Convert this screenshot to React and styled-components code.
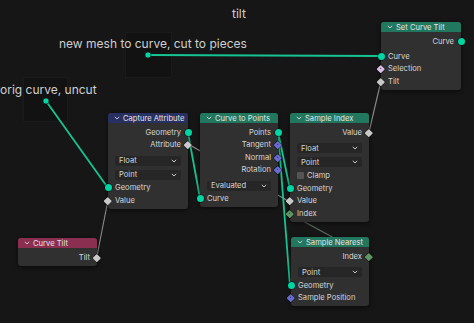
import React from "react";
import styled, { createGlobalStyle } from "styled-components";

const GlobalStyle = createGlobalStyle`
  html, body {
    margin: 0;
    padding: 0;
    background: #161616;
  }
  body {
    font-family: "Inter", "DejaVu Sans", sans-serif;
  }
`;

const SOCKET = {
  geo: "#00d6a3",
  float: "#c8c8c8",
  vector: "#6a6ad0",
  int: "#5f9663",
  bool: "#dcbde4",
};

const HEADER = {
  geo: "#22775f",
  attr: "#283061",
  input: "#8a2f4f",
};

const WIRE = {
  geo: "#16c493",
  float: "#8c8c8c",
  int: "#5d6b5d",
};

const wires = [
  { from: [148, 55], to: [381, 56], kind: "geo" },
  { from: [46, 101], to: [108, 188], kind: "geo" },
  { from: [188, 133], to: [200, 198], kind: "geo" },
  { from: [188, 144], to: [290, 202], kind: "float" },
  { from: [278, 132], to: [290, 189], kind: "geo" },
  { from: [278, 132], to: [290, 286], kind: "geo" },
  { from: [369, 257], to: [290, 214], kind: "int" },
  { from: [369, 132], to: [381, 81], kind: "float" },
  { from: [97, 256], to: [108, 200], kind: "float" },
];

const reroutes = [
  [148, 55],
  [46, 101],
];

const Canvas = styled.div`
  position: relative;
  width: 474px;
  height: 323px;
  overflow: hidden;
  background: #161616;
`;

const WireLayer = styled.svg`
  position: absolute;
  inset: 0;
  z-index: 1;
`;

const Title = styled.div`
  position: absolute;
  left: 232px;
  top: 6px;
  font-size: 12px;
  color: #cfcfcf;
`;

const Frame = styled.div`
  position: absolute;
  left: ${(p) => p.$x}px;
  top: ${(p) => p.$y}px;
  width: ${(p) => p.$w}px;
  height: ${(p) => p.$h}px;
  background: #121212;
  border: 1px solid #1a1a1a;
  box-sizing: border-box;
`;

const FrameLabel = styled.div`
  position: absolute;
  left: ${(p) => p.$x}px;
  top: ${(p) => p.$y}px;
  font-size: 12px;
  color: #cfcfcf;
  white-space: nowrap;
  z-index: 2;
`;

const Node = styled.div`
  position: absolute;
  left: ${(p) => p.$x}px;
  top: ${(p) => p.$y}px;
  width: ${(p) => p.$w || 79}px;
  z-index: 3;
  display: flex;
  flex-direction: column;
  background: #303030;
  border-radius: 3px;
  padding-bottom: 2px;
  box-shadow: 0 1px 4px rgba(0, 0, 0, 0.6);
  font-size: 7.6px;
  color: #d6d6d6;
`;

const Header = styled.div`
  height: 10px;
  display: flex;
  align-items: center;
  gap: 3px;
  padding: 0 6px;
  background: ${(p) => HEADER[p.$kind]};
  border-radius: 3px 3px 0 0;
  color: #e4e4e4;
  white-space: nowrap;
  margin-bottom: 3px;
`;

const Chevron = styled.svg`
  width: 6px;
  height: 4px;
  flex: none;
`;

const Row = styled.div`
  position: relative;
  height: 12.5px;
  display: flex;
  align-items: center;
  justify-content: ${(p) => (p.$out ? "flex-end" : "flex-start")};
  padding: 0 7px;
  white-space: nowrap;
`;

const Gap = styled.div`
  height: 2.5px;
`;

const Socket = styled.span`
  position: absolute;
  top: 50%;
  ${(p) => (p.$out ? "right: -3.5px;" : "left: -3.5px;")}
  width: ${(p) => (p.$diamond ? 5.5 : 7)}px;
  height: ${(p) => (p.$diamond ? 5.5 : 7)}px;
  margin-top: ${(p) => (p.$diamond ? -2.75 : -3.5)}px;
  ${(p) => (p.$diamond ? (p.$out ? "right: -2.75px;" : "left: -2.75px;") : "")}
  background: ${(p) => SOCKET[p.$type]};
  border-radius: ${(p) => (p.$diamond ? "0.8px" : "50%")};
  transform: ${(p) => (p.$diamond ? "rotate(45deg)" : "none")};
  box-shadow: 0 0 0 0.5px rgba(0, 0, 0, 0.7);
  &::after {
    content: "";
    display: ${(p) => (p.$dot ? "block" : "none")};
    position: absolute;
    left: 50%;
    top: 50%;
    width: 1.4px;
    height: 1.4px;
    margin: -0.7px 0 0 -0.7px;
    background: #2a2a2a;
    border-radius: 50%;
  }
`;

const SelectRow = styled.div`
  height: 14px;
  display: flex;
  align-items: center;
  padding: 0 7px;
`;

const Select = styled.div`
  flex: 1;
  height: 10px;
  display: flex;
  align-items: center;
  justify-content: space-between;
  padding: 0 4px;
  background: #262626;
  border-radius: 2px;
  color: #d6d6d6;
`;

const CheckRow = styled.div`
  height: 13px;
  display: flex;
  align-items: center;
  gap: 3px;
  padding: 0 7px;
`;

const Check = styled.span`
  width: 7px;
  height: 7px;
  background: #545454;
  border-radius: 1px;
`;

const Down = () => (
  <Chevron viewBox="0 0 6 4">
    <path d="M0.8 0.8 L3 3 L5.2 0.8" fill="none" stroke="#d8d8d8" strokeWidth="0.9" />
  </Chevron>
);

const Sock = ({ label, type, out, diamond, dot }) => (
  <Row $out={out}>
    {label}
    <Socket $out={out} $type={type} $diamond={diamond} $dot={dot} />
  </Row>
);

const Dropdown = ({ value }) => (
  <SelectRow>
    <Select>
      {value}
      <Down />
    </Select>
  </SelectRow>
);

const NodeHead = ({ kind, title }) => (
  <Header $kind={kind}>
    <Down />
    {title}
  </Header>
);

export default function App() {
  return (
    <>
      <GlobalStyle />
      <Canvas>
        <Title>tilt</Title>

        <Frame $x={125} $y={32} $w={47} $h={46} />
        <FrameLabel $x={59} $y={36}>new mesh to curve, cut to pieces</FrameLabel>
        <Frame $x={23} $y={77} $w={45} $h={45} />
        <FrameLabel $x={0} $y={82}>orig curve, uncut</FrameLabel>

        <WireLayer width="474" height="323">
          {wires.map((w, i) => (
            <line
              key={i}
              x1={w.from[0]}
              y1={w.from[1]}
              x2={w.to[0]}
              y2={w.to[1]}
              stroke={WIRE[w.kind]}
              strokeWidth={w.kind === "geo" ? 1.8 : 1.1}
            />
          ))}
          {reroutes.map(([x, y], i) => (
            <circle key={i} cx={x} cy={y} r="3" fill={SOCKET.geo} stroke="#111" strokeWidth="0.6" />
          ))}
        </WireLayer>

        <Node $x={381} $y={22} $w={80}>
          <NodeHead kind="geo" title="Set Curve Tilt" />
          <Sock out label="Curve" type="geo" />
          <Gap />
          <Sock label="Curve" type="geo" />
          <Sock label="Selection" type="bool" diamond dot />
          <Sock label="Tilt" type="float" diamond />
        </Node>

        <Node $x={108} $y={113} $w={80}>
          <NodeHead kind="attr" title="Capture Attribute" />
          <Sock out label="Geometry" type="geo" />
          <Sock out label="Attribute" type="float" diamond />
          <Gap />
          <Dropdown value="Float" />
          <Dropdown value="Point" />
          <Sock label="Geometry" type="geo" />
          <Sock label="Value" type="float" diamond />
        </Node>

        <Node $x={200} $y={113} $w={78}>
          <NodeHead kind="geo" title="Curve to Points" />
          <Sock out label="Points" type="geo" />
          <Sock out label="Tangent" type="vector" diamond dot />
          <Sock out label="Normal" type="vector" diamond dot />
          <Sock out label="Rotation" type="vector" diamond dot />
          <Gap />
          <Dropdown value="Evaluated" />
          <Sock label="Curve" type="geo" />
        </Node>

        <Node $x={290} $y={113} $w={79}>
          <NodeHead kind="geo" title="Sample Index" />
          <Sock out label="Value" type="float" diamond />
          <Gap />
          <Dropdown value="Float" />
          <Dropdown value="Point" />
          <CheckRow>
            <Check />
            Clamp
          </CheckRow>
          <Sock label="Geometry" type="geo" />
          <Sock label="Value" type="float" diamond />
          <Sock label="Index" type="int" diamond dot />
        </Node>

        <Node $x={291} $y={237} $w={78}>
          <NodeHead kind="geo" title="Sample Nearest" />
          <Sock out label="Index" type="int" diamond />
          <Gap />
          <Dropdown value="Point" />
          <Sock label="Geometry" type="geo" />
          <Sock label="Sample Position" type="vector" diamond dot />
        </Node>

        <Node $x={18} $y={238} $w={79}>
          <NodeHead kind="input" title="Curve Tilt" />
          <Sock out label="Tilt" type="float" diamond />
        </Node>
      </Canvas>
    </>
  );
}
